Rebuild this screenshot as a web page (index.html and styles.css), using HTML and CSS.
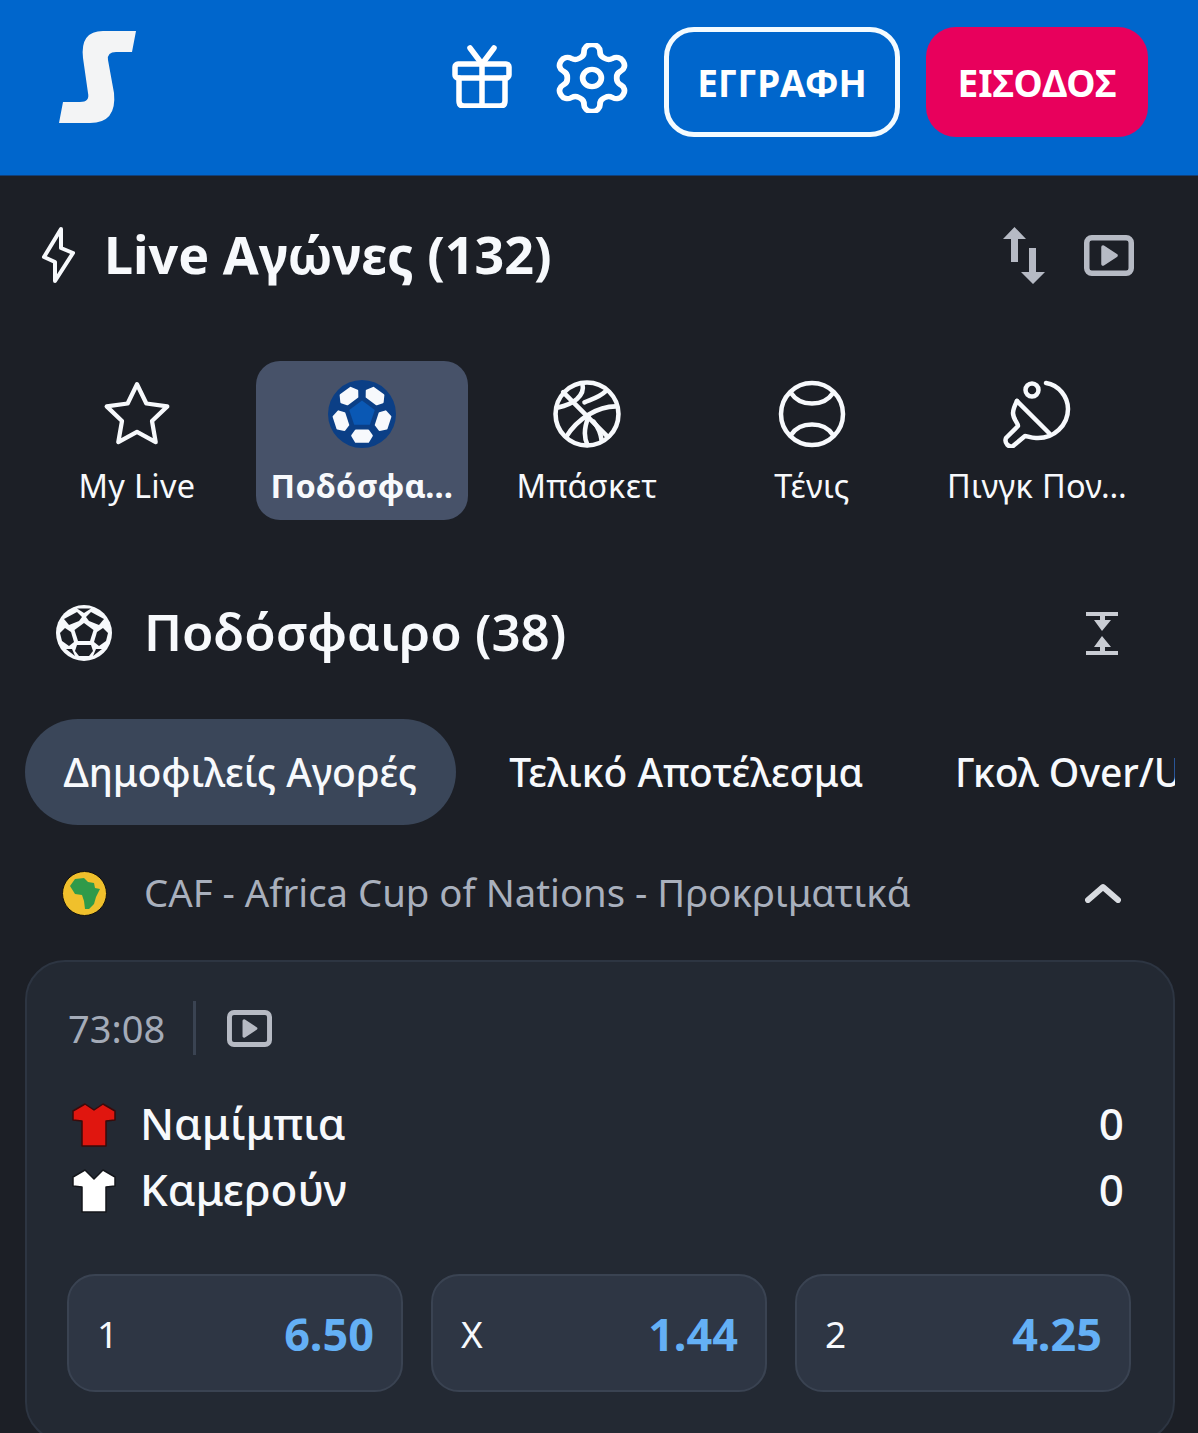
FILE: index.html
```html
<!DOCTYPE html>
<html lang="el">
<head>
    <meta charset="UTF-8">
    <meta name="viewport" content="width=device-width, initial-scale=1.0">
    <title>Live Αγώνες</title>
    <link rel="stylesheet" href="styles.css">
</head>
<body>
    <header class="topbar">
        <svg class="logo" viewBox="59 31 78 93"><path d="M136 31 L132 52 H116 Q107 52 108 60 L114 93 Q117 123 90 123 H59 L63 102 H80 Q90 102 88 93 L83 58 Q80 31 103 31 Z"/></svg>
        <div class="topbar-actions">
            <svg class="gift" viewBox="0 0 60 64" fill="none" stroke="currentColor" stroke-width="5.5" stroke-linecap="round" stroke-linejoin="round">
                <rect x="3" y="20" width="54" height="14" rx="3"/>
                <path d="M7 34 V57 Q7 62 12 62 H48 Q53 62 53 57 V34"/>
                <path d="M30 20 V62"/>
                <path d="M18 4 L30 20 L42 4"/>
            </svg>
            <svg class="gear" viewBox="2 1.500 20 21" preserveAspectRatio="none" fill="none" stroke="currentColor" stroke-width="1.600" stroke-linecap="round" stroke-linejoin="round">
                <path d="M12.22 2h-.44a2 2 0 0 0-2 2v.18a2 2 0 0 1-1 1.73l-.43.25a2 2 0 0 1-2 0l-.15-.08a2 2 0 0 0-2.73.73l-.22.38a2 2 0 0 0 .73 2.73l.15.1a2 2 0 0 1 1 1.72v.51a2 2 0 0 1-1 1.74l-.15.09a2 2 0 0 0-.73 2.73l.22.38a2 2 0 0 0 2.73.73l.15-.08a2 2 0 0 1 2 0l.43.25a2 2 0 0 1 1 1.73V20a2 2 0 0 0 2 2h.44a2 2 0 0 0 2-2v-.18a2 2 0 0 1 1-1.73l.43-.25a2 2 0 0 1 2 0l.15.08a2 2 0 0 0 2.73-.73l.22-.39a2 2 0 0 0-.73-2.73l-.15-.08a2 2 0 0 1-1-1.74v-.5a2 2 0 0 1 1-1.74l.15-.09a2 2 0 0 0 .73-2.73l-.22-.38a2 2 0 0 0-2.73-.73l-.15.08a2 2 0 0 1-2 0l-.43-.25a2 2 0 0 1-1-1.73V4a2 2 0 0 0-2-2z"/>
                <circle cx="12" cy="12" r="2.600"/>
            </svg>
            <a class="btn btn-outline">ΕΓΓΡΑΦΗ</a>
            <a class="btn btn-login">ΕΙΣΟΔΟΣ</a>
        </div>
    </header>

    <section class="live-head">
        <svg class="bolt" viewBox="41 226 34 58" fill="none" stroke="currentColor" stroke-width="4" stroke-linejoin="round"><path d="M61 229 L44 257 L55 262 L55 281 L73 253 L61 248 Z"/></svg>
        <h1>Live Αγώνες (132)</h1>
        <svg class="sort" viewBox="1003 227 42 57"><path d="M1014.500 227 L1026 239 H1018 V262 H1011 V239 H1003 Z"/><path d="M1033 284 L1021 272 H1029 V248 H1036 V272 H1045 Z"/></svg>
        <svg class="video video-head" viewBox="0 0 50 41"><rect x="2.750" y="2.750" width="44.500" height="35.500" rx="5" fill="none" stroke="currentColor" stroke-width="5.500"/><path d="M19 12 L32 20.500 L19 29 Z" fill="currentColor" stroke="currentColor" stroke-width="3.500" stroke-linejoin="round"/></svg>
    </section>

    <nav class="sports">
        <a class="sport">
            <svg class="sport-icon" viewBox="0 0 24 24" fill="none" stroke="currentColor" stroke-width="1.500" stroke-linejoin="round"><path d="M12 1.500 L15.300 8.300 L22.700 9.300 L17.300 14.500 L18.600 21.900 L12 18.300 L5.400 21.900 L6.700 14.500 L1.300 9.300 L8.700 8.300 Z"/></svg>
            <span class="sport-name">My Live</span>
        </a>
        <a class="sport sport-active">
            <svg class="sport-icon" viewBox="-33 -33 66 66">
                <circle r="33" fill="#0b3f86"/>
                <polygon points="0,-13 12.400,-4 7.600,10.500 -7.600,10.500 -12.400,-4" fill="#0a58b4"/>
                <g fill="#f7f9fc" stroke="#f7f9fc" stroke-width="2" stroke-linejoin="round">
                    <polygon points="-6,16 6,16 9.500,21 6,27 -6,27 -9.500,21"/>
                    <polygon transform="rotate(72)" points="-6,16 6,16 9.500,21 6,27 -6,27 -9.500,21"/>
                    <polygon transform="rotate(144)" points="-6,16 6,16 9.500,21 6,27 -6,27 -9.500,21"/>
                    <polygon transform="rotate(216)" points="-6,16 6,16 9.500,21 6,27 -6,27 -9.500,21"/>
                    <polygon transform="rotate(288)" points="-6,16 6,16 9.500,21 6,27 -6,27 -9.500,21"/>
                </g>
            </svg>
            <span class="sport-name">Ποδόσφα…</span>
        </a>
        <a class="sport">
            <svg class="sport-icon" viewBox="6 6 67 67" fill="none" stroke="currentColor" stroke-width="4.500" stroke-linecap="round" stroke-linejoin="round">
                <circle cx="39.500" cy="39.500" r="31"/>
                <path d="M35 10 C38 22 25 30 11 33"/>
                <path d="M16 18 L60 62"/>
                <path d="M68 32 C50 32 30 44 19 62"/>
                <path d="M41 42 C37 52 36 62 40 70"/>
                <path d="M37 28 C44 25 52 23 58 17"/>
                <path d="M46 47 C50 52 53 58 54 66"/>
            </svg>
            <span class="sport-name">Μπάσκετ</span>
        </a>
        <a class="sport">
            <svg class="sport-icon" viewBox="0 0 68 68" fill="none" stroke="currentColor" stroke-width="4.500" stroke-linecap="round">
                <circle cx="34" cy="34" r="31"/>
                <path d="M13 13 C22 27 46 27 55 13"/>
                <path d="M13 55 C22 41 46 41 55 55"/>
            </svg>
            <span class="sport-name">Τένις</span>
        </a>
        <a class="sport">
            <svg class="sport-icon" viewBox="1004 379 68 68" fill="none" stroke="currentColor" stroke-width="4.500" stroke-linecap="round" stroke-linejoin="round">
                <circle cx="1033" cy="389" r="6.500"/>
                <path d="M1047 382 C1060 384 1069 396 1069 408 C1069 424 1055 438 1037 437 C1032 437 1028 435 1026 435 L1014 445 C1010 447 1005 442 1007 437 L1019 425 C1019 422 1014 418 1014 412 C1014 408 1016 404 1018 400"/>
                <path d="M1018 400 L1050 432"/>
            </svg>
            <span class="sport-name">Πινγκ Πον…</span>
        </a>
    </nav>

    <section class="sport-head">
        <svg class="ball" viewBox="-28 -28 56 56">
            <circle r="28" fill="#f7f9fc"/>
            <g fill="#1c1f26">
                <polygon points="0,-10 9.500,-3 6,8 -6,8 -9.500,-3"/>
                <polygon points="-7,-21 -2,-16 -5,-12 -15,-8 -20,-14"/>
                <polygon points="7,-21 2,-16 5,-12 15,-8 20,-14"/>
                <polygon points="-19,-5 -13,-1 -10,9 -15,13 -22,8 -24,0"/>
                <polygon points="19,-5 13,-1 10,9 15,13 22,8 24,0"/>
                <polygon points="-7,12 7,12 9,18 5,23 -5,23 -9,18"/>
                <polygon points="-7,-24.500 7,-24.500 0,-20"/>
                <polygon points="-18,16 -12,16 -9,23"/>
                <polygon points="18,16 12,16 9,23"/>
            </g>
        </svg>
        <h2>Ποδόσφαιρο (38)</h2>
        <svg class="expand" viewBox="1086 610 33 46"><path d="M1086 612 H1118 V616 H1105 V620 H1111 L1102 631 L1094 620 H1100 V616 H1086 Z"/><path d="M1086 651 H1100 V647 H1094 L1102 636 L1111 647 H1105 V651 H1118 V655 H1086 Z"/></svg>
    </section>

    <div class="markets">
        <a class="market market-active">Δημοφιλείς Αγορές</a>
        <a class="market">Τελικό Αποτέλεσμα</a>
        <a class="market">Γκολ Over/Under</a>
    </div>

    <div class="league">
        <svg class="league-logo" viewBox="0 0 45 45">
            <circle cx="22.500" cy="22.500" r="22" fill="#f0c02c" stroke="#14120c" stroke-width="1"/>
            <path d="M8 15 L13 8 L22 7 L26 11 L32 12 L33 17 L38 18 L34 26 L32 33 L27 38 L23 38 L22 30 L20 24 L13 23 Z" fill="#2f9a4a"/>
        </svg>
        <span class="league-name">CAF - Africa Cup of Nations - Προκριματικά</span>
        <svg class="chevron" viewBox="0 0 36 20" fill="none" stroke="currentColor" stroke-width="6" stroke-linecap="round" stroke-linejoin="round"><path d="M3 17 L18 4 L33 17"/></svg>
    </div>

    <article class="match">
        <div class="match-meta">
            <span class="clock">73:08</span>
            <span class="meta-sep"></span>
            <svg class="video video-match" viewBox="0 0 50 41"><rect x="2.750" y="2.750" width="44.500" height="35.500" rx="5" fill="none" stroke="currentColor" stroke-width="5.500"/><path d="M19 12 L32 20.500 L19 29 Z" fill="currentColor" stroke="currentColor" stroke-width="3.500" stroke-linejoin="round"/></svg>
        </div>
        <div class="team">
            <svg class="shirt shirt-red" viewBox="0 0 44 44"><path d="M13 1 L22 7 L31 1 L43 8 L43 17 L34 18 L34 43 L10 43 L10 18 L1 17 L1 8 Z"/></svg>
            <span class="team-name">Ναμίμπια</span>
            <span class="score">0</span>
        </div>
        <div class="team">
            <svg class="shirt shirt-white" viewBox="0 0 44 44"><path d="M13 1 L22 10 L31 1 L43 8 L43 17 L34 18 L34 43 L10 43 L10 18 L1 17 L1 8 Z"/></svg>
            <span class="team-name">Καμερούν</span>
            <span class="score">0</span>
        </div>
        <div class="odds">
            <a class="odd"><span>1</span><b>6.50</b></a>
            <a class="odd"><span>X</span><b>1.44</b></a>
            <a class="odd"><span>2</span><b>4.25</b></a>
        </div>
    </article>
</body>
</html>
```

FILE: styles.css
```css
html, body {
    height: 1433px;
    overflow: hidden;
}
body {
    margin: 0;
    background: #1c1f26;
    color: #f7f9fc;
    font-family: "Noto Sans", "Open Sans", sans-serif;
}
h1, h2 {
    margin: 0;
    padding-bottom: 4px;
    font-size: 51px;
    font-weight: 600;
}
svg {
    display: block;
    flex: none;
}

.topbar {
    height: 175px;
    border-bottom: 1px solid #123f78;
    background: #0066cc;
    color: #fff;
    display: flex;
    align-items: flex-start;
    justify-content: space-between;
    padding: 0 50px 0 59px;
}
.logo {
    width: 78px;
    height: 93px;
    margin-top: 31px;
    fill: #f3f4f5;
}
.topbar-actions {
    display: flex;
    align-items: flex-start;
    margin-top: 27px;
}
.gift {
    width: 60px;
    height: 64px;
    margin-top: 17px;
}
.gear {
    width: 72px;
    height: 70px;
    margin: 16px 36px 0 44px;
}
.btn {
    height: 110px;
    box-sizing: border-box;
    border-radius: 30px;
    display: flex;
    align-items: center;
    justify-content: center;
    font-size: 37px;
    font-weight: 700;
}
.btn-outline {
    width: 236px;
    border: 5px solid #f4fbff;
}
.btn-login {
    width: 222px;
    margin-left: 26px;
    background: #e8005c;
}

.live-head {
    height: 158px;
    display: flex;
    align-items: center;
    padding: 0 64px 0 41px;
}
.bolt {
    width: 34px;
    height: 58px;
}
.live-head h1 {
    margin-left: 29px;
    flex: 1;
    font-size: 52px;
    font-weight: 700;
}
.sort {
    width: 42px;
    height: 57px;
    fill: #b6bac4;
}
.video {
    color: #b6bac4;
}
.video-head {
    width: 50px;
    height: 41px;
    margin-left: 39px;
}

.sports {
    display: flex;
    gap: 13px;
    padding: 27px 31px 0;
}
.sport {
    width: 212px;
    height: 159px;
    box-sizing: border-box;
    padding: 19px 13px 0;
    border-radius: 24px;
    display: flex;
    flex-direction: column;
    align-items: center;
}
.sport-active {
    background: #475269;
}
.sport-icon {
    width: 68px;
    height: 68px;
}
.sport-name {
    margin-top: 16px;
    font-size: 32.500px;
    line-height: 44px;
    letter-spacing: 0.300px;
    white-space: nowrap;
}
.sport-active .sport-name {
    font-weight: 700;
}

.sport-head {
    height: 80px;
    margin-top: 73px;
    display: flex;
    align-items: center;
    padding: 0 79px 0 56px;
}
.ball {
    width: 56px;
    height: 56px;
}
.sport-head h2 {
    margin-left: 32px;
    flex: 1;
}
.expand {
    width: 33px;
    height: 46px;
    fill: #c9ccd3;
}

.markets {
    margin: 46px 23px 0 25px;
    display: flex;
    overflow: hidden;
}
.market {
    flex: none;
    height: 106px;
    padding: 0 38.500px 2px;
    box-sizing: border-box;
    border-radius: 53px;
    display: flex;
    align-items: center;
    font-size: 39px;
    font-weight: 500;
    white-space: nowrap;
}
.market + .market {
    margin-left: 15px;
}
.market-active {
    background: #3a4659;
}

.league {
    height: 66px;
    margin-top: 35px;
    display: flex;
    align-items: center;
    padding: 0 77px 0 62px;
}
.league-logo {
    width: 45px;
    height: 45px;
}
.league-name {
    margin-left: 37px;
    flex: 1;
    padding-bottom: 2px;
    font-size: 38.300px;
    color: #a9b0bd;
}
.chevron {
    width: 36px;
    height: 20px;
    color: #d8dbe0;
}

.match {
    margin: 34px 23px 0 25px;
    padding: 39px 42px 48px 40px;
    background: #232933;
    border: 2px solid #2d3542;
    border-radius: 40px;
}
.match-meta {
    height: 54px;
    display: flex;
    align-items: center;
    padding-left: 1px;
}
.clock {
    font-size: 38px;
    color: #a4abb8;
}
.meta-sep {
    width: 3px;
    height: 54px;
    margin: 0 31px 0 28px;
    background: #3a4352;
}
.video-match {
    width: 45px;
    height: 37px;
}
.team {
    height: 66px;
    display: flex;
    align-items: center;
    padding: 0 7px 0 5px;
    font-size: 44px;
    font-weight: 500;
}
.match-meta + .team {
    margin-top: 37px;
}
.shirt {
    width: 44px;
    height: 44px;
    stroke-width: 1.500;
    stroke-linejoin: round;
}
.shirt-red {
    fill: #e0160f;
    stroke: #3a0a0a;
}
.shirt-white {
    fill: #fff;
    stroke: #14161b;
}
.team-name {
    margin-left: 24px;
    flex: 1;
    padding-bottom: 4px;
}
.score {
    padding-bottom: 4px;
}
.odds {
    margin-top: 50px;
    display: grid;
    grid-template-columns: repeat(3, 336px);
    gap: 28px;
}
.odd {
    height: 118px;
    box-sizing: border-box;
    padding: 0 27px 0 28px;
    background: #2e3644;
    border: 2px solid #3a4352;
    border-radius: 28px;
    display: flex;
    align-items: center;
    justify-content: space-between;
    font-size: 37px;
}
.odd b {
    font-size: 45px;
    font-weight: 700;
    color: #64b0f5;
}
```
